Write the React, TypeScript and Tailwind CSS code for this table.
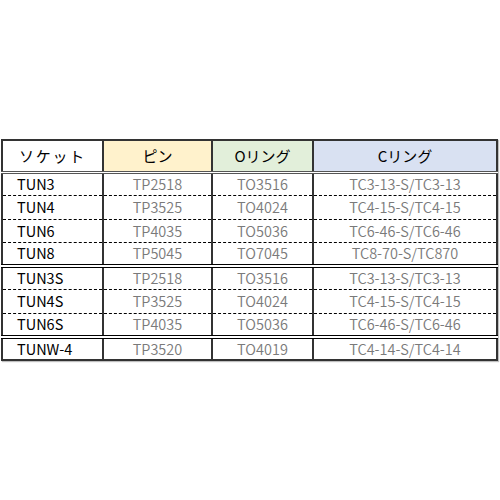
const rows = [
  { socket: 'TUN3', pin: 'TP2518', o: 'TO3516', c: 'TC3-13-S/TC3-13', line: 'dashed' },
  { socket: 'TUN4', pin: 'TP3525', o: 'TO4024', c: 'TC4-15-S/TC4-15', line: 'dashed' },
  { socket: 'TUN6', pin: 'TP4035', o: 'TO5036', c: 'TC6-46-S/TC6-46', line: 'dashed' },
  { socket: 'TUN8', pin: 'TP5045', o: 'TO7045', c: 'TC8-70-S/TC870', line: 'double' },
  { socket: 'TUN3S', pin: 'TP2518', o: 'TO3516', c: 'TC3-13-S/TC3-13', line: 'dashed' },
  { socket: 'TUN4S', pin: 'TP3525', o: 'TO4024', c: 'TC4-15-S/TC4-15', line: 'dashed' },
  { socket: 'TUN6S', pin: 'TP4035', o: 'TO5036', c: 'TC6-46-S/TC6-46', line: 'double' },
  { socket: 'TUNW-4', pin: 'TP3520', o: 'TO4019', c: 'TC4-14-S/TC4-14', line: 'none' },
];

export default function App() {
  return (
    <div className="w-[500px] h-[500px] bg-white pt-[139px] pl-[1px] font-['Noto_Sans_CJK_JP',sans-serif]">
      <table className="table-fixed border-collapse border-2 border-[#333] shadow-[1px_1px_1px_rgba(0,0,0,0.25)] w-[497px] text-[14.5px] leading-none font-[350]">
        <colgroup>
          <col className="w-[101px]" />
          <col className="w-[109px]" />
          <col className="w-[101px]" />
          <col />
        </colgroup>
        <thead>
          <tr className="h-[32px] border-b-[3px] border-double border-[#555]">
            <th className="bg-white font-normal text-[15px] tracking-[0.12em] text-black border-r-2 border-[#333]">ソケット</th>
            <th className="bg-[#fff2cc] font-normal text-[15px] text-black border-r-2 border-[#333]">ピン</th>
            <th className="bg-[#e2efda] font-normal text-[15px] text-black border-r-2 border-[#333]">Oリング</th>
            <th className="bg-[#d9e1f2] font-normal text-[15px] text-black">Cリング</th>
          </tr>
        </thead>
        <tbody>
          {rows.map(r => (
            <tr
              key={r.socket + r.pin}
              className={
                r.line === 'dashed'
                  ? 'h-[23.5px] border-b border-dashed border-black'
                  : r.line === 'double'
                  ? 'h-[23.5px] border-b-[4px] border-double border-black'
                  : 'h-[23.5px]'
              }
            >
              <td className="pl-[14px] text-black font-normal border-r-2 border-[#333]">{r.socket}</td>
              <td className="text-center text-[#7a7a7a] border-r-2 border-[#333]">{r.pin}</td>
              <td className="text-center text-[#7a7a7a] border-r-2 border-[#333]">{r.o}</td>
              <td className="text-center text-[#7a7a7a]">{r.c}</td>
            </tr>
          ))}
        </tbody>
      </table>
    </div>
  );
}
